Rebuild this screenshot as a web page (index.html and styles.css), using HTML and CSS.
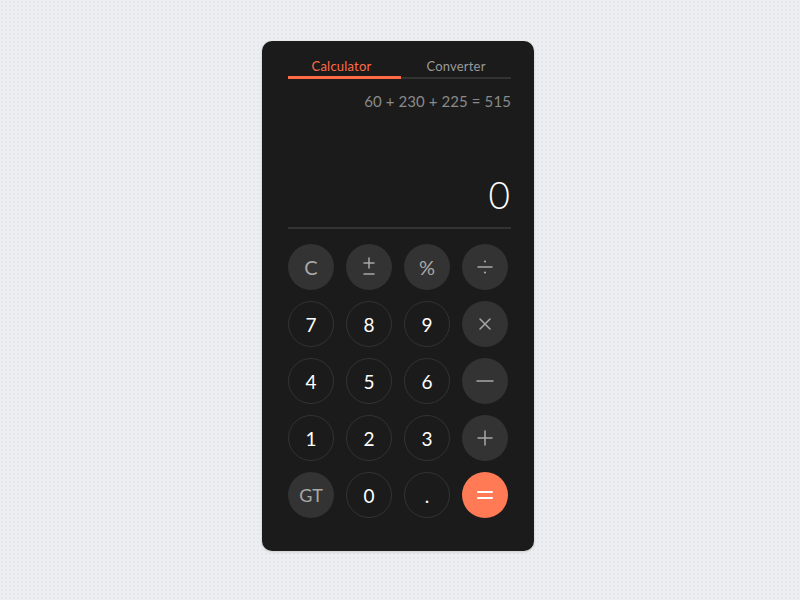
FILE: index.html
```html
<!DOCTYPE html>
<html>
<head>
<meta charset="utf-8">
<link rel="stylesheet" href="styles.css">
</head>
<body>
<div class="card">
  <div class="tabs">
    <div class="tab active">Calculator</div>
    <div class="tab">Converter</div>
  </div>
  <div class="history">60 + 230 + 225 = 515</div>
  <div class="display">0</div>
  <div class="keys">
    <div class="key fn big">C</div>
    <div class="key fn"><svg class="ico" width="16" height="22" viewBox="0 0 16 22"><path d="M8 2v10M3 7h10M3 18h10" /></svg></div>
    <div class="key fn big">%</div>
    <div class="key fn"><svg class="ico" width="18" height="18" viewBox="0 0 18 18"><path d="M2 9h14" /><circle cx="9" cy="3.5" r="1.1" class="dot"/><circle cx="9" cy="14.5" r="1.1" class="dot"/></svg></div>
    <div class="key num">7</div>
    <div class="key num">8</div>
    <div class="key num">9</div>
    <div class="key fn"><svg class="ico" width="14" height="14" viewBox="0 0 14 14"><path d="M2 2l10 10M12 2L2 12" /></svg></div>
    <div class="key num">4</div>
    <div class="key num">5</div>
    <div class="key num">6</div>
    <div class="key fn"><svg class="ico" width="18" height="4" viewBox="0 0 18 4"><path d="M1 2h16" /></svg></div>
    <div class="key num">1</div>
    <div class="key num">2</div>
    <div class="key num">3</div>
    <div class="key fn"><svg class="ico" width="18" height="18" viewBox="0 0 18 18"><path d="M9 2v14M2 9h14" /></svg></div>
    <div class="key fn gt">GT</div>
    <div class="key num">0</div>
    <div class="key num">.</div>
    <div class="key eq"><svg class="ico white" width="18" height="12" viewBox="0 0 18 12"><path d="M2 3h14M2 9h14" /></svg></div>
  </div>
</div>
</body>
</html>
```
FILE: styles.css
```css
html, body {
  margin: 0;
  padding: 0;
}
body {
  width: 800px;
  height: 600px;
  background-color: #eceef1;
  background-image: radial-gradient(circle, #e4e7ea 0.8px, transparent 1px);
  background-size: 4px 4px;
  font-family: Lato, "Open Sans", sans-serif;
  overflow: hidden;
}
.card {
  box-sizing: border-box;
  margin: 41px 0 0 262px;
  width: 272px;
  height: 510px;
  background: #1b1b1b;
  border-radius: 10px;
  box-shadow: 0 1px 3px rgba(0,0,0,0.15);
  padding: 16px 23px 0 26px;
  display: flex;
  flex-direction: column;
}
.tabs {
  display: flex;
  border-bottom: 2px solid #333;
  width: 223px;
}
.tab {
  flex: 1 1 0;
  box-sizing: border-box;
  text-align: center;
  font-size: 13px;
  line-height: 18px;
  padding-bottom: 1px;
  color: #9a9a9a;
  letter-spacing: 0.2px;
  margin-bottom: -2px;
  border-bottom: 3px solid transparent;
}
.tab.active {
  flex: 0 0 113px;
  color: #ff6b47;
  border-bottom-color: #ff6b47;
  padding-right: 6px;
}
.history {
  margin-top: 12px;
  text-align: right;
  font-size: 15px;
  line-height: 20px;
  color: #8a8a8a;
  letter-spacing: 0.1px;
}
.display {
  margin-top: 62px;
  text-align: right;
  font-size: 37px;
  font-weight: 300;
  line-height: 44px;
  color: #ffffff;
  padding-right: 1px;
  padding-bottom: 10px;
  border-bottom: 2px solid #333;
}
.keys {
  margin-top: 15px;
  display: grid;
  grid-template-columns: repeat(4, 46px);
  grid-auto-rows: 46px;
  column-gap: 12px;
  row-gap: 11px;
}
.key {
  box-sizing: border-box;
  width: 46px;
  height: 46px;
  border-radius: 50%;
  display: flex;
  align-items: center;
  justify-content: center;
  font-size: 19px;
  color: #ffffff;
}
.num {
  border: 1px solid #333;
}
.fn {
  background: #333333;
  color: #a8a8a8;
}
.big {
  font-size: 20px;
}
.gt {
  font-size: 18px;
}
.ico {
  display: block;
  fill: none;
  stroke: #a8a8a8;
  stroke-width: 1.5;
  stroke-linecap: round;
}
.ico .dot {
  fill: #a8a8a8;
  stroke: none;
}
.ico.white {
  stroke: #ffffff;
  stroke-width: 2;
}
.eq {
  background: #ff7a55;
}
```
